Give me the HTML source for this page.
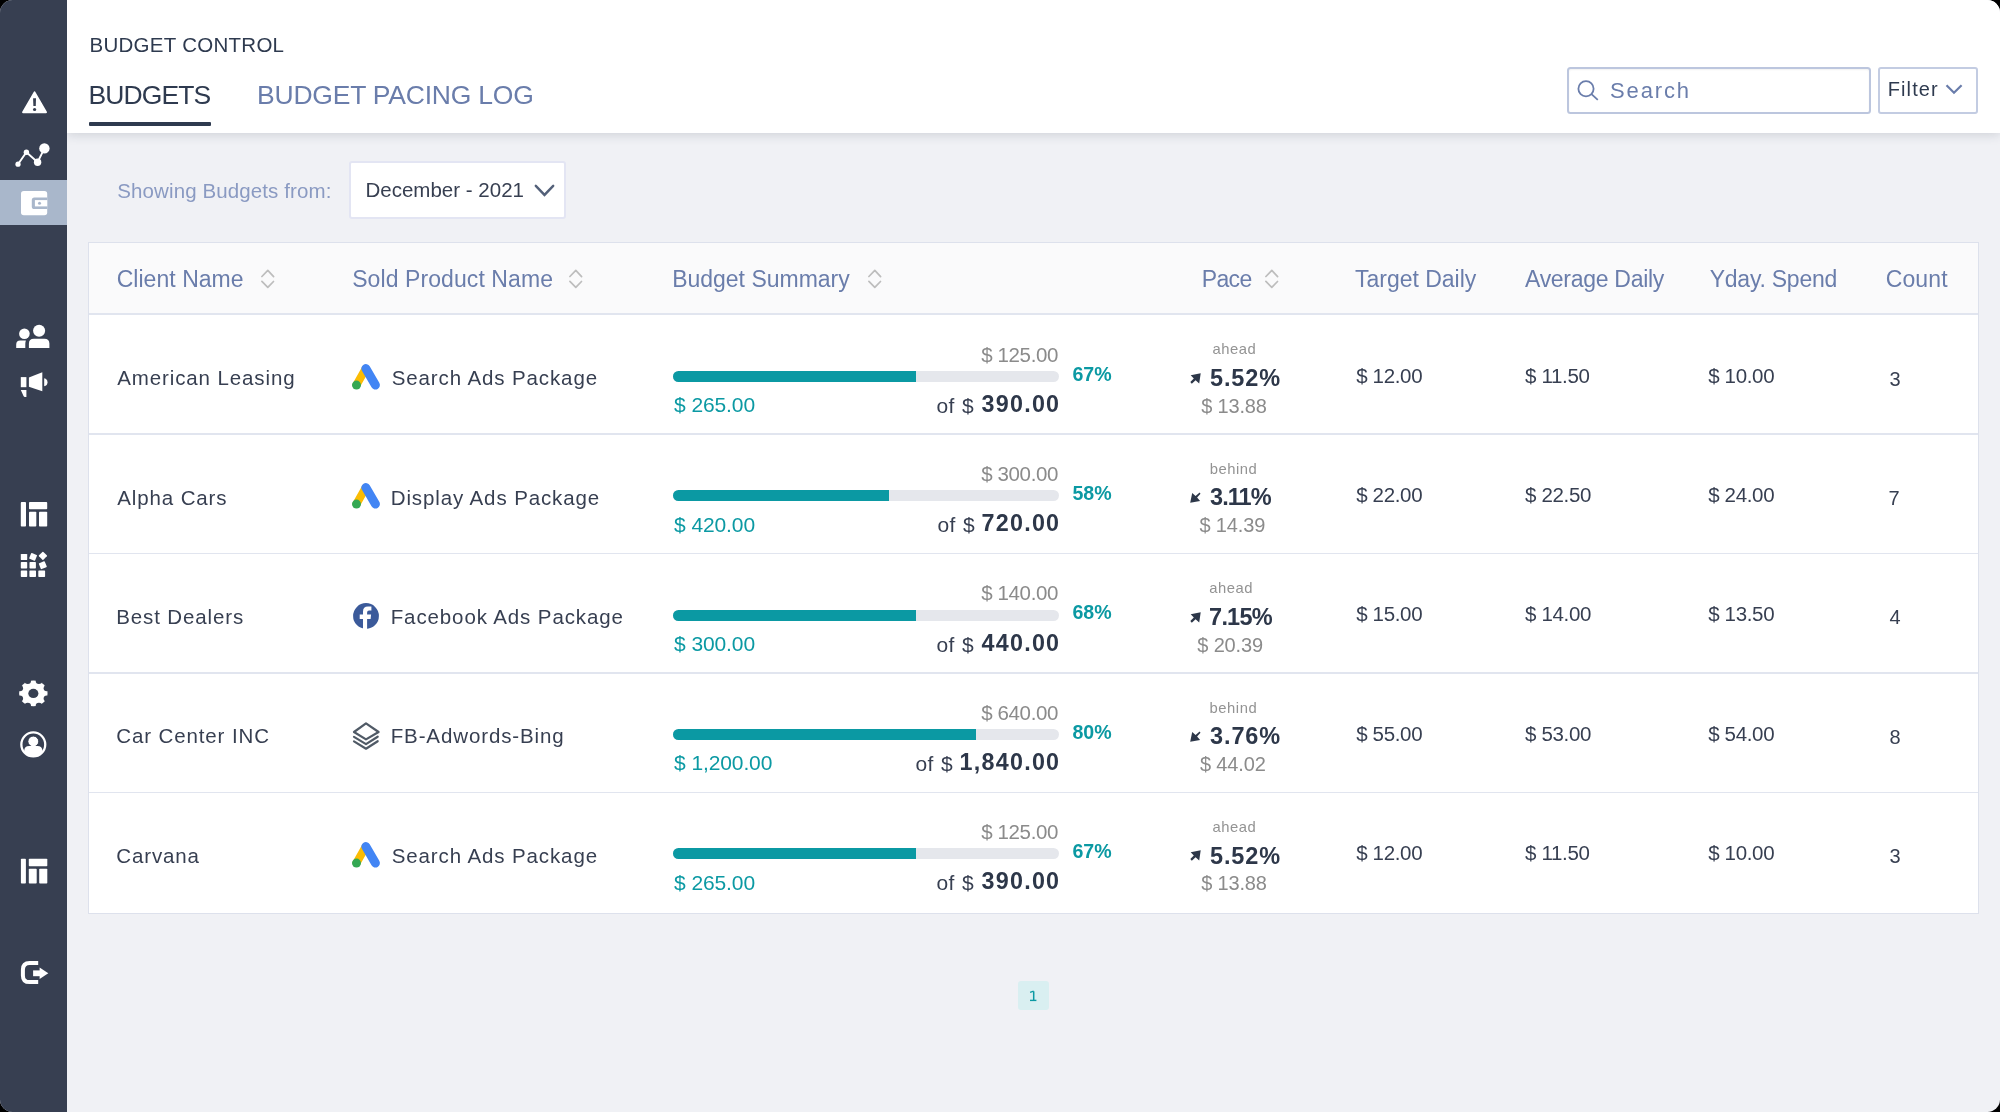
<!DOCTYPE html>
<html><head><meta charset="utf-8"><style>
html,body{margin:0;padding:0;width:2000px;height:1112px;overflow:hidden;background:#000;}
#app{position:absolute;left:0;top:0;width:2000px;height:1112px;border-radius:12.5px;overflow:hidden;background:#f0f1f5;font-family:"Liberation Sans", sans-serif;}
.tx{position:absolute;white-space:nowrap;font-family:"Liberation Sans", sans-serif;}
.ic{position:absolute;overflow:visible;}
#side{position:absolute;left:0;top:0;width:66.5px;height:1112px;background:#373f51;}
#active{position:absolute;left:0;top:180.4px;width:66.5px;height:44.4px;background:#a9b7cb;}
#hdr{position:absolute;left:66.5px;top:0;width:1933.5px;height:133.2px;background:#fff;box-shadow:0 2px 10px rgba(40,50,70,0.16);}
#uline{position:absolute;left:89px;top:122.4px;width:122px;height:3.2px;background:#2e3a4f;border-radius:1px;}
#search{position:absolute;left:1567px;top:67px;width:299.5px;height:42.5px;border:2px solid #bcc6de;border-radius:3.5px;background:#fff;box-shadow:inset 0 1px 2px rgba(0,0,0,0.06);}
#filter{position:absolute;left:1878px;top:67px;width:96px;height:42.5px;border:2px solid #c3cce2;border-radius:3px;background:#fff;}
#dd{position:absolute;left:349px;top:161px;width:212.8px;height:54px;border:2px solid #e3e5f3;border-radius:3px;background:#fff;}
#tbl{position:absolute;left:88px;top:242px;width:1889px;height:669.5px;border:1px solid #dde1ec;background:#fff;}
#th{position:absolute;left:89px;top:243px;width:1889px;height:70.4px;background:#fafafb;}
.hl{position:absolute;left:89px;width:1889px;height:1.6px;background:#e1e5ef;}
.bar{position:absolute;left:673px;width:386px;height:11px;border-radius:5.5px;background:#e5e7ec;overflow:hidden;}
.fill{position:absolute;left:0;top:0;height:11px;background:#0b99a3;}
#pg{position:absolute;left:1018px;top:981px;width:30.6px;height:29px;border-radius:3px;background:#d9eff1;}
</style></head><body><div id="app">
<div id="hdr"></div>
<div id="side"></div>
<div id="active"></div>
<svg class="ic" style="left:0;top:0" width="67" height="1112" viewBox="0 0 67 1112">
<g fill="#fff">
<!-- warning -->
<path d="M34.55 92.4 L46 112.2 L23.1 112.2 Z" stroke="#fff" stroke-width="2" stroke-linejoin="round"/>
<path d="M33.1 98.3 H36 L35.75 105.9 H33.35 Z" fill="#373f51"/>
<circle cx="34.6" cy="109.5" r="1.6" fill="#373f51"/>
<!-- chart -->
<g transform="translate(0.4 0.9)">
<polyline points="17.6,163.3 26,151.3 37.2,161.3 44,147.5" fill="none" stroke="#fff" stroke-width="1.9"/>
<circle cx="17.6" cy="163.3" r="2.6"/>
<circle cx="26" cy="151.3" r="2.7"/>
<circle cx="37.2" cy="161.3" r="3.7"/>
<circle cx="44" cy="147.5" r="5.2"/>
</g>
<!-- wallet -->
<rect x="21" y="191" width="26.2" height="24.3" rx="2.8"/>
<path d="M47.2 197.4 H34.4 Q31.8 197.4 31.8 200 V206.4 Q31.8 209 34.4 209 H47.2 Z" fill="#a9b7cb"/>
<rect x="34.9" y="200.1" width="12.3" height="6.3" fill="#fff"/>
<circle cx="39.5" cy="203.2" r="1.5" fill="#a9b7cb"/>
<!-- users -->
<circle cx="39.1" cy="330.8" r="6.05"/>
<path d="M28.9 348 V343.8 Q28.9 338.8 33.9 338.8 H44.4 Q49.4 338.8 49.4 343.8 V348 Z"/>
<circle cx="24.4" cy="333.8" r="5.3"/>
<path d="M16.2 348 V344.5 Q16.2 340.5 20.2 340.5 H25.9 Q25.3 342 25.3 344 V348 Z"/>
<!-- megaphone -->
<rect x="20.8" y="377.1" width="5.6" height="10.1"/>
<path d="M20.8 390 H26.4 V396.9 H25 Q23.9 396.9 23.4 395.7 Z"/>
<path d="M28.9 377.6 L42.3 372.3 V391.2 L28.9 386.7 Z"/>
<path d="M44.2 378.2 Q47.5 379 47.5 382.25 Q47.5 385.5 44.2 386.3 Z"/>
<!-- layout -->
<rect x="20.8" y="502.1" width="5.2" height="24.5" rx="0.8"/>
<rect x="29" y="502.1" width="18.2" height="7.2" rx="0.8"/>
<rect x="29" y="511.8" width="7.3" height="14.8" rx="0.8"/>
<rect x="39" y="511.8" width="8.2" height="14.8" rx="0.8"/>
<!-- apps -->
<rect x="20.8" y="553.9" width="6.4" height="6.2" rx="0.7"/>
<rect x="29.9" y="553.8" width="6.4" height="6.2" rx="0.7" transform="rotate(22 33.1 556.9)"/>
<rect x="39.8" y="552.7" width="6.2" height="6.2" rx="0.7" transform="rotate(45 42.9 555.8)"/>
<rect x="20.8" y="562" width="6.4" height="6.4" rx="0.7"/>
<rect x="29.5" y="562" width="6.4" height="6.4" rx="0.7"/>
<rect x="39.6" y="562" width="6.4" height="6.4" rx="0.7" transform="rotate(-22 42.8 565.2)"/>
<rect x="20.8" y="570.4" width="6.4" height="6.5" rx="0.7"/>
<rect x="29.4" y="570.4" width="6.6" height="6.5" rx="0.7"/>
<rect x="38.3" y="570.4" width="6.8" height="6.5" rx="0.7"/>
<!-- gear -->
<mask id="gm" maskUnits="userSpaceOnUse" x="-20" y="-20" width="40" height="40"><circle r="12.9" fill="#fff"/><circle cx="12.288" cy="5.090" r="2.95" fill="#000"/><circle cx="5.090" cy="12.288" r="2.95" fill="#000"/><circle cx="-5.090" cy="12.288" r="2.95" fill="#000"/><circle cx="-12.288" cy="5.090" r="2.95" fill="#000"/><circle cx="-12.288" cy="-5.090" r="2.95" fill="#000"/><circle cx="-5.090" cy="-12.288" r="2.95" fill="#000"/><circle cx="5.090" cy="-12.288" r="2.95" fill="#000"/><circle cx="12.288" cy="-5.090" r="2.95" fill="#000"/><circle r="4.6" fill="#000"/></mask><g transform="translate(33.35 693.4) scale(1.1 1)"><rect x="-14" y="-14" width="28" height="28" fill="#fff" mask="url(#gm)"/></g>
<!-- user circle -->
<circle cx="33.3" cy="744.4" r="11.95" fill="none" stroke="#fff" stroke-width="2.3"/>
<circle cx="33.3" cy="741.4" r="5.2" stroke="#373f51" stroke-width="0.9"/>
<clipPath id="uc"><circle cx="33.3" cy="744.4" r="11.8"/></clipPath>
<path clip-path="url(#uc)" d="M24.2 760 V750.8 Q24.2 745.9 29.2 745.9 H37.4 Q42.4 745.9 42.4 750.8 V760 Z"/>
<circle cx="33.3" cy="741.4" r="4.75"/>
<!-- layout 2 -->
<rect x="20.9" y="858.7" width="5" height="24.8" rx="0.8"/>
<rect x="28.8" y="858.7" width="18.5" height="7.5" rx="0.8"/>
<rect x="28.8" y="868.8" width="7.9" height="14.7" rx="0.8"/>
<rect x="39.2" y="868.8" width="8.1" height="14.7" rx="0.8"/>
<!-- logout -->
<path d="M38.2 963 H29.6 Q22.9 963 22.9 969.7 V975.4 Q22.9 982.1 29.6 982.1 H38.2" fill="none" stroke="#fff" stroke-width="4"/>
<rect x="33.1" y="970.4" width="7" height="5.8"/>
<path d="M39.6 967.5 L48.3 973.3 L39.6 979 Z"/>
</g>
</svg>

<div id="uline"></div>
<div id="search"></div>
<svg class="ic" style="left:1576px;top:79px" width="25" height="23" viewBox="0 0 25 23"><circle cx="10" cy="9.7" r="7.6" fill="none" stroke="#6a7dab" stroke-width="1.8"/><line x1="15.5" y1="15.2" x2="21.8" y2="20.8" stroke="#6a7dab" stroke-width="1.8"/></svg>
<div id="filter"></div>
<svg class="ic" style="left:1945px;top:84px" width="18" height="11" viewBox="0 0 18 11"><path d="M1.5 1.2 L9 8.8 L16.6 1.2" fill="none" stroke="#6a7dab" stroke-width="2.2"/></svg>
<div id="dd"></div>
<svg class="ic" style="left:533px;top:183px" width="23" height="15" viewBox="0 0 23 15"><path d="M2.8 2.8 L11.5 11.9 L20.2 2.8" fill="none" stroke="#536079" stroke-width="2.4" stroke-linecap="round"/></svg>
<div id="tbl"></div>
<div id="th"></div>
<div class="hl" style="top:313.4px"></div>
<div class="hl" style="top:433.2px"></div>
<div class="hl" style="top:552.6px"></div>
<div class="hl" style="top:672.2px"></div>
<div class="hl" style="top:791.6px"></div>
<svg class="ic" style="left:260.80px;top:268px" width="14" height="22" viewBox="0 0 14 22"><g fill="none" stroke="#bdbdbd" stroke-width="1.7" stroke-linecap="round" stroke-linejoin="round"><path d="M0.9 8.5 L6.8 2.4 L12.6 8.6"/><path d="M0.9 13.4 L6.8 19.4 L12.5 13.5"/></g></svg>
<svg class="ic" style="left:569.30px;top:268px" width="14" height="22" viewBox="0 0 14 22"><g fill="none" stroke="#bdbdbd" stroke-width="1.7" stroke-linecap="round" stroke-linejoin="round"><path d="M0.9 8.5 L6.8 2.4 L12.6 8.6"/><path d="M0.9 13.4 L6.8 19.4 L12.5 13.5"/></g></svg>
<svg class="ic" style="left:867.80px;top:268px" width="14" height="22" viewBox="0 0 14 22"><g fill="none" stroke="#bdbdbd" stroke-width="1.7" stroke-linecap="round" stroke-linejoin="round"><path d="M0.9 8.5 L6.8 2.4 L12.6 8.6"/><path d="M0.9 13.4 L6.8 19.4 L12.5 13.5"/></g></svg>
<svg class="ic" style="left:1264.50px;top:268px" width="14" height="22" viewBox="0 0 14 22"><g fill="none" stroke="#bdbdbd" stroke-width="1.7" stroke-linecap="round" stroke-linejoin="round"><path d="M0.9 8.5 L6.8 2.4 L12.6 8.6"/><path d="M0.9 13.4 L6.8 19.4 L12.5 13.5"/></g></svg>
<div class="bar" style="top:370.80px"><div class="fill" style="width:243px"></div></div>
<svg class="ic" style="left:352px;top:364.00px" width="29" height="26" viewBox="0 0 29 26"><line x1="13.5" y1="5" x2="4.6" y2="20.8" stroke="#fbbc04" stroke-width="8" stroke-linecap="round"/><line x1="13.8" y1="4.6" x2="23.4" y2="21.1" stroke="#4285f4" stroke-width="9" stroke-linecap="round"/><circle cx="4.5" cy="21.1" r="4.5" fill="#34a853"/></svg>
<div class="bar" style="top:490.20px"><div class="fill" style="width:216px"></div></div>
<svg class="ic" style="left:352px;top:483.40px" width="29" height="26" viewBox="0 0 29 26"><line x1="13.5" y1="5" x2="4.6" y2="20.8" stroke="#fbbc04" stroke-width="8" stroke-linecap="round"/><line x1="13.8" y1="4.6" x2="23.4" y2="21.1" stroke="#4285f4" stroke-width="9" stroke-linecap="round"/><circle cx="4.5" cy="21.1" r="4.5" fill="#34a853"/></svg>
<div class="bar" style="top:609.60px"><div class="fill" style="width:243px"></div></div>
<svg class="ic" style="left:352px;top:601.60px" width="28" height="28" viewBox="0 0 28 28"><circle cx="14" cy="14" r="12.9" fill="#3b5a9a"/><path d="M11 26.9 V16.9 H7.7 V12.6 H11 V9.5 Q11 4.5 16 4.5 H19.4 V8.5 H17 Q15.1 8.5 15.1 10.5 V12.6 H19.1 L18.6 16.9 H15.1 V26.9 Z" fill="#fff"/></svg>
<div class="bar" style="top:729.00px"><div class="fill" style="width:303px"></div></div>
<svg class="ic" style="left:352px;top:721.40px" width="28" height="30" viewBox="0 0 28 30"><g fill="none" stroke="#505a66" stroke-width="2.2" stroke-linejoin="round" stroke-linecap="round"><path d="M14 2.4 L2 11 L14 18.4 L26.6 11 Z"/><path d="M2 15.9 L14 23.1 L25.7 15.7"/><path d="M2 20.4 L14 27.7 L25.7 20.2"/></g></svg>
<div class="bar" style="top:848.40px"><div class="fill" style="width:243px"></div></div>
<svg class="ic" style="left:352px;top:841.60px" width="29" height="26" viewBox="0 0 29 26"><line x1="13.5" y1="5" x2="4.6" y2="20.8" stroke="#fbbc04" stroke-width="8" stroke-linecap="round"/><line x1="13.8" y1="4.6" x2="23.4" y2="21.1" stroke="#4285f4" stroke-width="9" stroke-linecap="round"/><circle cx="4.5" cy="21.1" r="4.5" fill="#34a853"/></svg>
<div id="pg"></div>
<div id="txt" style="position:absolute;left:0;top:0;width:2000px;height:1112px;will-change:transform">
<div class="tx" style="left:89.50px;top:34.74px;font-size:20.5px;line-height:20.5px;color:#2e3a4f;letter-spacing:0.273px">BUDGET CONTROL</div>
<div class="tx" style="left:88.50px;top:81.76px;font-size:26.5px;line-height:26.5px;color:#2e3a4f;letter-spacing:-0.921px">BUDGETS</div>
<div class="tx" style="left:257.00px;top:81.76px;font-size:26.5px;line-height:26.5px;color:#6a7dab;letter-spacing:-0.215px">BUDGET PACING LOG</div>
<div class="tx" style="left:1610.00px;top:79.97px;font-size:22px;line-height:22px;color:#6a7dab;letter-spacing:1.866px">Search</div>
<div class="tx" style="left:1887.80px;top:79.27px;font-size:20px;line-height:20px;color:#2e3a4f;letter-spacing:1.083px">Filter</div>
<div class="tx" style="left:117.30px;top:180.64px;font-size:20.5px;line-height:20.5px;color:#8a9ac2;letter-spacing:0.107px">Showing Budgets from:</div>
<div class="tx" style="left:365.40px;top:180.14px;font-size:20.5px;line-height:20.5px;color:#373f51;letter-spacing:0.015px">December - 2021</div>
<div class="tx" style="left:116.70px;top:267.53px;font-size:23px;line-height:23px;color:#6a7dab;letter-spacing:0.035px">Client Name</div>
<div class="tx" style="left:352.20px;top:267.53px;font-size:23px;line-height:23px;color:#6a7dab;letter-spacing:0.085px">Sold Product Name</div>
<div class="tx" style="left:672.20px;top:267.53px;font-size:23px;line-height:23px;color:#6a7dab;letter-spacing:-0.014px">Budget Summary</div>
<div class="tx" style="left:1201.70px;top:267.53px;font-size:23px;line-height:23px;color:#6a7dab;letter-spacing:-0.611px">Pace</div>
<div class="tx" style="left:1355.00px;top:267.53px;font-size:23px;line-height:23px;color:#6a7dab;letter-spacing:-0.012px">Target Daily</div>
<div class="tx" style="left:1525.00px;top:268.03px;font-size:23px;line-height:23px;color:#6a7dab;letter-spacing:-0.288px">Average Daily</div>
<div class="tx" style="left:1709.70px;top:267.53px;font-size:23px;line-height:23px;color:#6a7dab;letter-spacing:-0.241px">Yday. Spend</div>
<div class="tx" style="left:1885.70px;top:267.53px;font-size:23px;line-height:23px;color:#6a7dab;letter-spacing:0.129px">Count</div>
<div class="tx" style="left:117.20px;top:368.24px;font-size:20.5px;line-height:20.5px;color:#373f51;letter-spacing:0.887px">American Leasing</div>
<div class="tx" style="left:391.70px;top:368.24px;font-size:20.5px;line-height:20.5px;color:#373f51;letter-spacing:0.887px">Search Ads Package</div>
<div class="tx" style="left:981.20px;top:344.54px;font-size:20.5px;line-height:20.5px;color:#8b8b8b;letter-spacing:-0.371px">$ 125.00</div>
<div class="tx" style="left:1072.50px;top:364.60px;font-size:19.6px;line-height:19.6px;font-weight:700;color:#0b99a3;letter-spacing:-0.047px">67%</div>
<div class="tx" style="left:674.10px;top:394.22px;font-size:21px;line-height:21px;color:#0b99a3;letter-spacing:-0.109px">$ 265.00</div>
<div class="tx" style="left:981.50px;top:392.77px;font-size:23.3px;line-height:23.3px;font-weight:700;color:#2d3749;letter-spacing:1.260px">390.00</div>
<div class="tx" style="left:961.90px;top:394.72px;font-size:21px;line-height:21px;color:#373f51">$</div>
<div class="tx" style="left:936.50px;top:394.72px;font-size:21px;line-height:21px;color:#373f51;letter-spacing:0.3px">of</div>
<div class="tx" style="left:1212.50px;top:342.47px;font-size:14.8px;line-height:14.8px;color:#939393;letter-spacing:0.521px">ahead</div>
<div class="tx" style="left:1210.10px;top:366.90px;font-size:23.5px;line-height:23.5px;font-weight:700;color:#2d3749;letter-spacing:0.841px">5.52%</div>
<svg class="ic" style="left:1190px;top:372.80px" width="11" height="11" viewBox="0 0 11 11"><polygon points="10.7,0.2 0.7,2.3 3.8,5.5 0.3,9.0 1.8,10.8 5.6,7.3 9.2,10.5" fill="#2d3749"/></svg>
<div class="tx" style="left:1201.15px;top:395.87px;font-size:20px;line-height:20px;color:#8b8b8b;letter-spacing:-0.151px">$ 13.88</div>
<div class="tx" style="left:1356.20px;top:365.64px;font-size:20.5px;line-height:20.5px;color:#373f51;letter-spacing:-0.333px">$ 12.00</div>
<div class="tx" style="left:1525.00px;top:365.64px;font-size:20.5px;line-height:20.5px;color:#373f51;letter-spacing:-0.333px">$ 11.50</div>
<div class="tx" style="left:1708.20px;top:365.64px;font-size:20.5px;line-height:20.5px;color:#373f51;letter-spacing:-0.333px">$ 10.00</div>
<div class="tx" style="left:1889.60px;top:368.67px;font-size:20px;line-height:20px;color:#373f51;letter-spacing:0.000px">3</div>
<div class="tx" style="left:117.20px;top:487.64px;font-size:20.5px;line-height:20.5px;color:#373f51;letter-spacing:0.887px">Alpha Cars</div>
<div class="tx" style="left:390.70px;top:487.64px;font-size:20.5px;line-height:20.5px;color:#373f51;letter-spacing:0.887px">Display Ads Package</div>
<div class="tx" style="left:981.20px;top:463.94px;font-size:20.5px;line-height:20.5px;color:#8b8b8b;letter-spacing:-0.371px">$ 300.00</div>
<div class="tx" style="left:1072.50px;top:484.00px;font-size:19.6px;line-height:19.6px;font-weight:700;color:#0b99a3;letter-spacing:-0.047px">58%</div>
<div class="tx" style="left:674.10px;top:513.62px;font-size:21px;line-height:21px;color:#0b99a3;letter-spacing:-0.109px">$ 420.00</div>
<div class="tx" style="left:981.50px;top:512.17px;font-size:23.3px;line-height:23.3px;font-weight:700;color:#2d3749;letter-spacing:1.260px">720.00</div>
<div class="tx" style="left:962.90px;top:514.12px;font-size:21px;line-height:21px;color:#373f51">$</div>
<div class="tx" style="left:937.50px;top:514.12px;font-size:21px;line-height:21px;color:#373f51;letter-spacing:0.3px">of</div>
<div class="tx" style="left:1209.80px;top:461.87px;font-size:14.8px;line-height:14.8px;color:#939393;letter-spacing:0.521px">behind</div>
<div class="tx" style="left:1210.10px;top:486.30px;font-size:23.5px;line-height:23.5px;font-weight:700;color:#2d3749;letter-spacing:-0.960px">3.11%</div>
<svg class="ic" style="left:1190px;top:492.20px" width="11" height="11" viewBox="0 0 11 11"><polygon points="0.2,10.8 2.2,0.9 5.6,4 9.6,0.6 10.5,1.8 7.1,5.6 10.1,9" fill="#2d3749"/></svg>
<div class="tx" style="left:1199.45px;top:515.27px;font-size:20px;line-height:20px;color:#8b8b8b;letter-spacing:-0.151px">$ 14.39</div>
<div class="tx" style="left:1356.20px;top:485.04px;font-size:20.5px;line-height:20.5px;color:#373f51;letter-spacing:-0.333px">$ 22.00</div>
<div class="tx" style="left:1525.00px;top:485.04px;font-size:20.5px;line-height:20.5px;color:#373f51;letter-spacing:-0.333px">$ 22.50</div>
<div class="tx" style="left:1708.20px;top:485.04px;font-size:20.5px;line-height:20.5px;color:#373f51;letter-spacing:-0.333px">$ 24.00</div>
<div class="tx" style="left:1888.60px;top:488.07px;font-size:20px;line-height:20px;color:#373f51;letter-spacing:0.000px">7</div>
<div class="tx" style="left:116.20px;top:607.04px;font-size:20.5px;line-height:20.5px;color:#373f51;letter-spacing:0.887px">Best Dealers</div>
<div class="tx" style="left:390.70px;top:607.04px;font-size:20.5px;line-height:20.5px;color:#373f51;letter-spacing:0.887px">Facebook Ads Package</div>
<div class="tx" style="left:981.20px;top:583.34px;font-size:20.5px;line-height:20.5px;color:#8b8b8b;letter-spacing:-0.371px">$ 140.00</div>
<div class="tx" style="left:1072.50px;top:603.40px;font-size:19.6px;line-height:19.6px;font-weight:700;color:#0b99a3;letter-spacing:-0.047px">68%</div>
<div class="tx" style="left:674.10px;top:633.02px;font-size:21px;line-height:21px;color:#0b99a3;letter-spacing:-0.109px">$ 300.00</div>
<div class="tx" style="left:981.50px;top:631.57px;font-size:23.3px;line-height:23.3px;font-weight:700;color:#2d3749;letter-spacing:1.260px">440.00</div>
<div class="tx" style="left:961.90px;top:633.52px;font-size:21px;line-height:21px;color:#373f51">$</div>
<div class="tx" style="left:936.50px;top:633.52px;font-size:21px;line-height:21px;color:#373f51;letter-spacing:0.3px">of</div>
<div class="tx" style="left:1209.30px;top:581.27px;font-size:14.8px;line-height:14.8px;color:#939393;letter-spacing:0.521px">ahead</div>
<div class="tx" style="left:1209.10px;top:605.70px;font-size:23.5px;line-height:23.5px;font-weight:700;color:#2d3749;letter-spacing:-0.784px">7.15%</div>
<svg class="ic" style="left:1190px;top:611.60px" width="11" height="11" viewBox="0 0 11 11"><polygon points="10.7,0.2 0.7,2.3 3.8,5.5 0.3,9.0 1.8,10.8 5.6,7.3 9.2,10.5" fill="#2d3749"/></svg>
<div class="tx" style="left:1197.25px;top:634.67px;font-size:20px;line-height:20px;color:#8b8b8b;letter-spacing:-0.151px">$ 20.39</div>
<div class="tx" style="left:1356.20px;top:604.44px;font-size:20.5px;line-height:20.5px;color:#373f51;letter-spacing:-0.333px">$ 15.00</div>
<div class="tx" style="left:1525.00px;top:604.44px;font-size:20.5px;line-height:20.5px;color:#373f51;letter-spacing:-0.333px">$ 14.00</div>
<div class="tx" style="left:1708.20px;top:604.44px;font-size:20.5px;line-height:20.5px;color:#373f51;letter-spacing:-0.333px">$ 13.50</div>
<div class="tx" style="left:1889.60px;top:607.47px;font-size:20px;line-height:20px;color:#373f51;letter-spacing:0.000px">4</div>
<div class="tx" style="left:116.20px;top:726.44px;font-size:20.5px;line-height:20.5px;color:#373f51;letter-spacing:0.887px">Car Center INC</div>
<div class="tx" style="left:390.70px;top:726.44px;font-size:20.5px;line-height:20.5px;color:#373f51;letter-spacing:0.887px">FB-Adwords-Bing</div>
<div class="tx" style="left:981.20px;top:702.74px;font-size:20.5px;line-height:20.5px;color:#8b8b8b;letter-spacing:-0.371px">$ 640.00</div>
<div class="tx" style="left:1072.50px;top:722.80px;font-size:19.6px;line-height:19.6px;font-weight:700;color:#0b99a3;letter-spacing:-0.047px">80%</div>
<div class="tx" style="left:674.10px;top:752.42px;font-size:21px;line-height:21px;color:#0b99a3;letter-spacing:-0.109px">$ 1,200.00</div>
<div class="tx" style="left:959.55px;top:750.97px;font-size:23.3px;line-height:23.3px;font-weight:700;color:#2d3749;letter-spacing:1.260px">1,840.00</div>
<div class="tx" style="left:940.95px;top:752.92px;font-size:21px;line-height:21px;color:#373f51">$</div>
<div class="tx" style="left:915.55px;top:752.92px;font-size:21px;line-height:21px;color:#373f51;letter-spacing:0.3px">of</div>
<div class="tx" style="left:1209.60px;top:700.67px;font-size:14.8px;line-height:14.8px;color:#939393;letter-spacing:0.521px">behind</div>
<div class="tx" style="left:1210.10px;top:725.10px;font-size:23.5px;line-height:23.5px;font-weight:700;color:#2d3749;letter-spacing:0.866px">3.76%</div>
<svg class="ic" style="left:1190px;top:731.00px" width="11" height="11" viewBox="0 0 11 11"><polygon points="0.2,10.8 2.2,0.9 5.6,4 9.6,0.6 10.5,1.8 7.1,5.6 10.1,9" fill="#2d3749"/></svg>
<div class="tx" style="left:1199.95px;top:754.07px;font-size:20px;line-height:20px;color:#8b8b8b;letter-spacing:-0.151px">$ 44.02</div>
<div class="tx" style="left:1356.20px;top:723.84px;font-size:20.5px;line-height:20.5px;color:#373f51;letter-spacing:-0.333px">$ 55.00</div>
<div class="tx" style="left:1525.00px;top:723.84px;font-size:20.5px;line-height:20.5px;color:#373f51;letter-spacing:-0.333px">$ 53.00</div>
<div class="tx" style="left:1708.20px;top:723.84px;font-size:20.5px;line-height:20.5px;color:#373f51;letter-spacing:-0.333px">$ 54.00</div>
<div class="tx" style="left:1889.60px;top:726.87px;font-size:20px;line-height:20px;color:#373f51;letter-spacing:0.000px">8</div>
<div class="tx" style="left:116.20px;top:845.84px;font-size:20.5px;line-height:20.5px;color:#373f51;letter-spacing:0.887px">Carvana</div>
<div class="tx" style="left:391.70px;top:845.84px;font-size:20.5px;line-height:20.5px;color:#373f51;letter-spacing:0.887px">Search Ads Package</div>
<div class="tx" style="left:981.20px;top:822.14px;font-size:20.5px;line-height:20.5px;color:#8b8b8b;letter-spacing:-0.371px">$ 125.00</div>
<div class="tx" style="left:1072.50px;top:842.20px;font-size:19.6px;line-height:19.6px;font-weight:700;color:#0b99a3;letter-spacing:-0.047px">67%</div>
<div class="tx" style="left:674.10px;top:871.82px;font-size:21px;line-height:21px;color:#0b99a3;letter-spacing:-0.109px">$ 265.00</div>
<div class="tx" style="left:981.50px;top:870.37px;font-size:23.3px;line-height:23.3px;font-weight:700;color:#2d3749;letter-spacing:1.260px">390.00</div>
<div class="tx" style="left:961.90px;top:872.32px;font-size:21px;line-height:21px;color:#373f51">$</div>
<div class="tx" style="left:936.50px;top:872.32px;font-size:21px;line-height:21px;color:#373f51;letter-spacing:0.3px">of</div>
<div class="tx" style="left:1212.50px;top:820.07px;font-size:14.8px;line-height:14.8px;color:#939393;letter-spacing:0.521px">ahead</div>
<div class="tx" style="left:1210.10px;top:844.50px;font-size:23.5px;line-height:23.5px;font-weight:700;color:#2d3749;letter-spacing:0.841px">5.52%</div>
<svg class="ic" style="left:1190px;top:850.40px" width="11" height="11" viewBox="0 0 11 11"><polygon points="10.7,0.2 0.7,2.3 3.8,5.5 0.3,9.0 1.8,10.8 5.6,7.3 9.2,10.5" fill="#2d3749"/></svg>
<div class="tx" style="left:1201.15px;top:873.47px;font-size:20px;line-height:20px;color:#8b8b8b;letter-spacing:-0.151px">$ 13.88</div>
<div class="tx" style="left:1356.20px;top:843.24px;font-size:20.5px;line-height:20.5px;color:#373f51;letter-spacing:-0.333px">$ 12.00</div>
<div class="tx" style="left:1525.00px;top:843.24px;font-size:20.5px;line-height:20.5px;color:#373f51;letter-spacing:-0.333px">$ 11.50</div>
<div class="tx" style="left:1708.20px;top:843.24px;font-size:20.5px;line-height:20.5px;color:#373f51;letter-spacing:-0.333px">$ 10.00</div>
<div class="tx" style="left:1889.60px;top:846.27px;font-size:20px;line-height:20px;color:#373f51;letter-spacing:0.000px">3</div>
<svg class="ic" style="left:1020px;top:985px" width="25" height="20" viewBox="1020 985 25 20"><g stroke="#0b99a3" fill="none"><path d="M1033.7 991.3 V1000.4" stroke-width="1.5"/><path d="M1030 1000.4 H1036.4" stroke-width="1.4"/><path d="M1030.1 992.3 L1033.6 991.2" stroke-width="1.3"/></g></svg>
</div>
</div></body></html>
